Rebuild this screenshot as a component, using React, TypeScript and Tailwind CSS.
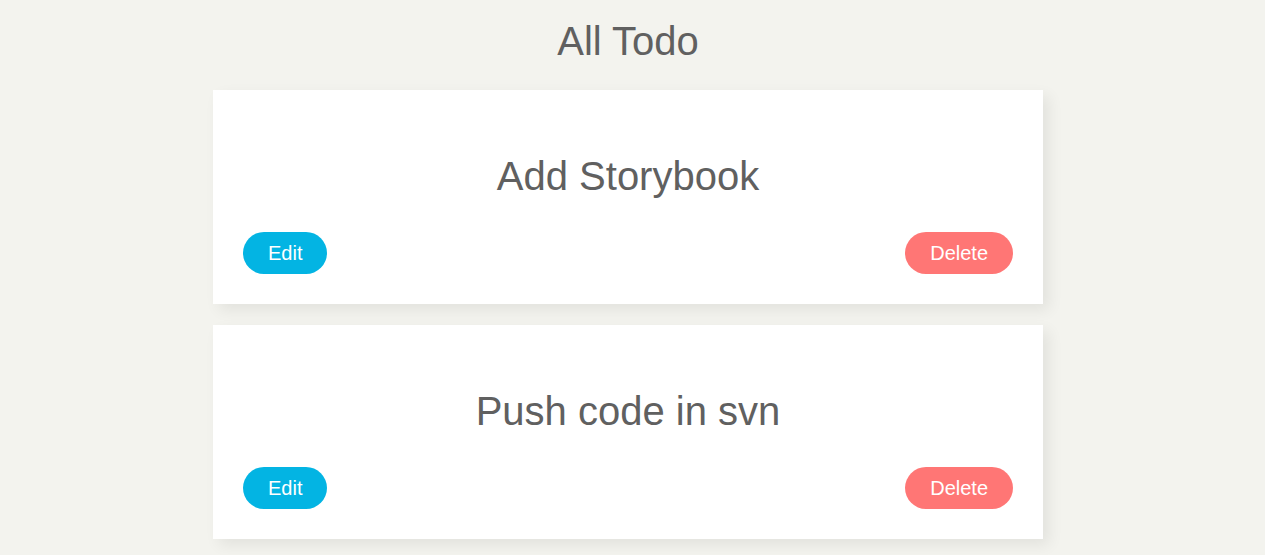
import React from 'react';

const todos = ['Add Storybook', 'Push code in svn'];

const TodoCard: React.FC<{ title: string }> = ({ title }) => {
  return (
    <div className="bg-white px-[30px] pt-[63px] pb-[30px] shadow-[6px_6px_14px_rgba(0,0,0,0.07)]">
      <h2 className="text-center text-[40px] leading-[46px] text-[#606060] mb-[33px]">{title}</h2>
      <div className="flex justify-between">
        <button className="h-[42px] px-[25px] rounded-full bg-[#03b4e3] text-white text-[20px]">Edit</button>
        <button className="h-[42px] px-[25px] rounded-full bg-[#ff7675] text-white text-[20px]">Delete</button>
      </div>
    </div>
  );
};

const App: React.FC = () => {
  return (
    <div className="min-h-screen bg-[#f3f3ee] font-['Liberation_Sans',Arial,sans-serif] pt-[18px] pr-[9px]">
      <h1 className="text-center text-[40px] leading-[46px] text-[#606060] mb-[26px]">All Todo</h1>
      <div className="w-[830px] mx-auto flex flex-col gap-[21px]">
        {todos.map((t) => (
          <TodoCard key={t} title={t} />
        ))}
      </div>
    </div>
  );
};

export default App;
